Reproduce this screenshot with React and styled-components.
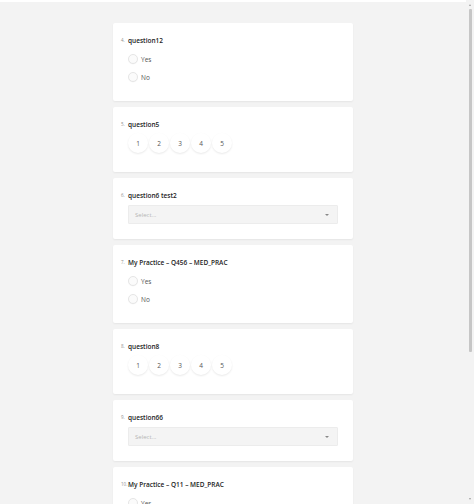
import React from "react";
import styled, { createGlobalStyle } from "styled-components";

const questions = [
  { no: 4, title: "question12", type: "yesno" },
  { no: 5, title: "question5", type: "rating" },
  { no: 6, title: "question6 test2", type: "select" },
  { no: 7, title: "My Practice – Q456 – MED_PRAC", type: "yesno" },
  { no: 8, title: "question8", type: "rating" },
  { no: 9, title: "question66", type: "select" },
  { no: 10, title: "My Practice – Q11 – MED_PRAC", type: "yesno" },
];

function App() {
  return (
    <Page>
      <GlobalStyle />
      <Content>
        <TopBar />
        <List>
          {questions.map((q) => (
            <Card key={q.no}>
              <Header>
                <Number>{q.no}.</Number>
                <Title>{q.title}</Title>
              </Header>
              <Body>
                {q.type === "yesno" && (
                  <Options>
                    <Option>
                      <Radio />
                      <span>Yes</span>
                    </Option>
                    <Option>
                      <Radio />
                      <span>No</span>
                    </Option>
                  </Options>
                )}
                {q.type === "rating" && (
                  <Ratings>
                    {[1, 2, 3, 4, 5].map((n) => (
                      <RateButton key={n}>{n}</RateButton>
                    ))}
                  </Ratings>
                )}
                {q.type === "select" && (
                  <SelectBox>
                    <span>Select...</span>
                    <Caret />
                  </SelectBox>
                )}
              </Body>
            </Card>
          ))}
        </List>
      </Content>
      <Rail>
        <Arrow />
        <Track>
          <Thumb />
        </Track>
        <Arrow $down />
      </Rail>
    </Page>
  );
}

export default App;

const GlobalStyle = createGlobalStyle`
  html, body {
    margin: 0;
    padding: 0;
    overflow: hidden;
  }
  body {
    font-family: "Open Sans", "Liberation Sans", sans-serif;
    background: #f3f3f3;
  }
`;

const Page = styled.div`
  display: flex;
  height: 100vh;
  background: #f3f3f3;
`;

const Content = styled.div`
  flex: 1;
  overflow: hidden;
`;

const Rail = styled.div`
  width: 8px;
  display: flex;
  flex-direction: column;
  align-items: center;
  padding: 2px 0 2px;
  box-sizing: border-box;
`;

const Arrow = styled.div`
  width: 0;
  height: 0;
  margin: 2px 0;
  border-left: 1.5px solid transparent;
  border-right: 1.5px solid transparent;
  ${(p) =>
    p.$down
      ? "border-top: 2px solid #a0a0a0;"
      : "border-bottom: 2px solid #a0a0a0;"}
`;

const Track = styled.div`
  flex: 1;
  width: 100%;
  display: flex;
  justify-content: center;
  padding-top: 1px;
`;

const Thumb = styled.div`
  width: 3px;
  height: 343px;
  background: #c6c6c6;
  border-radius: 1px;
`;

const TopBar = styled.div`
  height: 2px;
  background: #ffffff;
`;

const List = styled.div`
  display: flex;
  flex-direction: column;
  align-items: center;
  gap: 6px;
  padding: 21px 0 24px;
`;

const Card = styled.div`
  width: 240px;
  box-sizing: border-box;
  padding: 12px 15px 15px 8px;
  background: #ffffff;
  border-radius: 2px;
  box-shadow: 0 1px 2px rgba(0, 0, 0, 0.06);
`;

const Header = styled.div`
  display: flex;
  align-items: center;
  height: 10px;
`;

const Number = styled.span`
  width: 7px;
  font-size: 4.5px;
  color: #8f8f8f;
`;

const Title = styled.span`
  font-size: 6.5px;
  font-weight: 600;
  color: #222222;
  white-space: nowrap;
`;

const Body = styled.div`
  padding-left: 7px;
`;

const Options = styled.div`
  display: flex;
  flex-direction: column;
  margin-top: 5px;
`;

const Option = styled.label`
  display: flex;
  align-items: center;
  gap: 3px;
  height: 18px;
  font-size: 6.5px;
  color: #555555;
`;

const Radio = styled.span`
  width: 10px;
  height: 10px;
  box-sizing: border-box;
  border-radius: 50%;
  border: 1px solid #e6e6e6;
  background: #fbfbfb;
  box-shadow: 0 0.5px 1px rgba(0, 0, 0, 0.04);
`;

const Ratings = styled.div`
  display: flex;
  gap: 1px;
  margin: 4px 0 4px;
`;

const RateButton = styled.span`
  width: 20px;
  height: 20px;
  border-radius: 50%;
  display: flex;
  align-items: center;
  justify-content: center;
  background: #ffffff;
  box-shadow: 0 1px 2px rgba(0, 0, 0, 0.09);
  font-size: 6.5px;
  color: #555555;
`;

const SelectBox = styled.div`
  display: flex;
  align-items: center;
  justify-content: space-between;
  height: 17px;
  margin-top: 5px;
  padding: 0 8px 0 6px;
  background: #f4f4f4;
  border: 1px solid #ececec;
  border-radius: 1px;
  font-size: 6px;
  color: #b5b5b5;
`;

const Caret = styled.span`
  width: 0;
  height: 0;
  border-left: 2px solid transparent;
  border-right: 2px solid transparent;
  border-top: 2px solid #888888;
`;
